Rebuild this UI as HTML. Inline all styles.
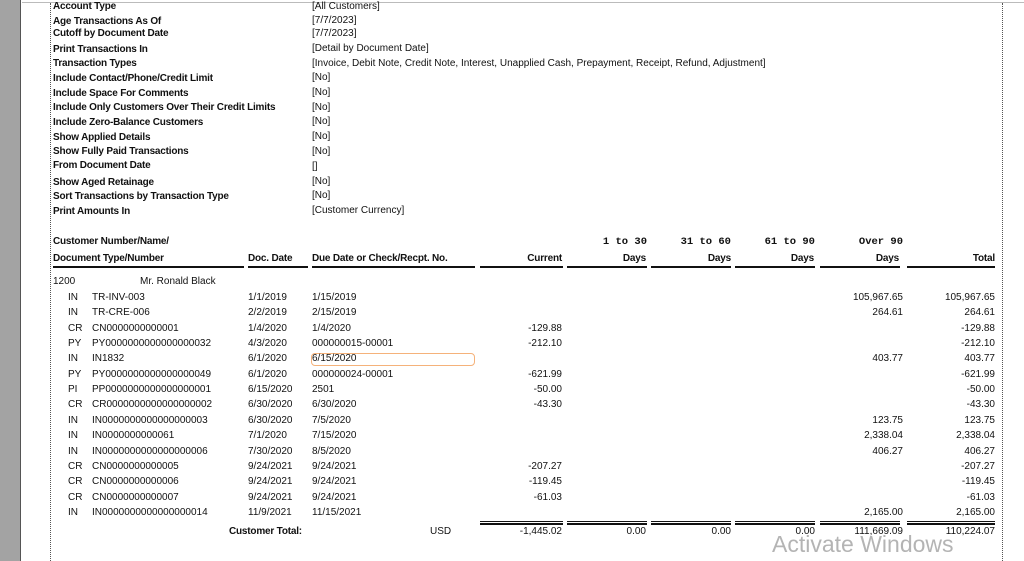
<!DOCTYPE html>
<html><head><meta charset="utf-8"><style>
*{margin:0;padding:0;box-sizing:border-box}
body{width:1024px;height:561px;overflow:hidden;background:#fff;font-family:"Liberation Sans",Arial,sans-serif;font-size:10px;color:#111;position:relative}
.gb{position:absolute;left:0;top:0;width:21px;height:561px;background:#a3a3a3;border-right:1px solid #555}
.top{position:absolute;left:22px;top:2px;right:0;height:1px;background:#bbb}
.vd{position:absolute;top:3px;height:558px;border-left:1px dotted #555}
.t{position:absolute;white-space:nowrap;line-height:12px}
.b{font-weight:bold;letter-spacing:-0.2px}
.r{text-align:right}
.m{font-family:"Liberation Mono",monospace;font-weight:bold;font-size:10.5px}
.ln{position:absolute;height:1.5px;background:#111}
</style></head><body>
<div class="gb"></div><div class="top"></div>
<div class="vd" style="left:50px"></div><div class="vd" style="left:1002px"></div>

<div class="t b" style="left:53px;top:1px">Account Type</div><div class="t" style="left:312px;top:1px">[All Customers]</div>
<div class="t b" style="left:53px;top:16px">Age Transactions As Of</div><div class="t" style="left:312px;top:15px">[7/7/2023]</div>
<div class="t b" style="left:53px;top:28px">Cutoff by Document Date</div><div class="t" style="left:312px;top:28px">[7/7/2023]</div>
<div class="t b" style="left:53px;top:44px">Print Transactions In</div><div class="t" style="left:312px;top:43px">[Detail by Document Date]</div>
<div class="t b" style="left:53px;top:58px">Transaction Types</div><div class="t" style="left:312px;top:58px">[Invoice, Debit Note, Credit Note, Interest, Unapplied Cash, Prepayment, Receipt, Refund, Adjustment]</div>
<div class="t b" style="left:53px;top:73px">Include Contact/Phone/Credit Limit</div><div class="t" style="left:312px;top:72px">[No]</div>
<div class="t b" style="left:53px;top:88px">Include Space For Comments</div><div class="t" style="left:312px;top:87px">[No]</div>
<div class="t b" style="left:53px;top:102px">Include Only Customers Over Their Credit Limits</div><div class="t" style="left:312px;top:102px">[No]</div>
<div class="t b" style="left:53px;top:117px">Include Zero-Balance Customers</div><div class="t" style="left:312px;top:116px">[No]</div>
<div class="t b" style="left:53px;top:132px">Show Applied Details</div><div class="t" style="left:312px;top:131px">[No]</div>
<div class="t b" style="left:53px;top:146px">Show Fully Paid Transactions</div><div class="t" style="left:312px;top:146px">[No]</div>
<div class="t b" style="left:53px;top:160px">From Document Date</div><div class="t" style="left:312px;top:161px">[]</div>
<div class="t b" style="left:53px;top:177px">Show Aged Retainage</div><div class="t" style="left:312px;top:176px">[No]</div>
<div class="t b" style="left:53px;top:191px">Sort Transactions by Transaction Type</div><div class="t" style="left:312px;top:190px">[No]</div>
<div class="t b" style="left:53px;top:206px">Print Amounts In</div><div class="t" style="left:312px;top:205px">[Customer Currency]</div>

<div class="t b" style="left:53px;top:236px">Customer Number/Name/</div>
<div class="t b" style="left:53px;top:253px">Document Type/Number</div>
<div class="t b" style="left:248px;top:253px">Doc. Date</div>
<div class="t b" style="left:312px;top:253px">Due Date or Check/Recpt. No.</div>
<div class="t b r" style="left:480px;width:82px;top:253px">Current</div>
<div class="t m r" style="left:567px;width:80px;top:236px">1 to 30</div>
<div class="t b r" style="left:567px;width:79px;top:253px">Days</div>
<div class="t m r" style="left:651px;width:80px;top:236px">31 to 60</div>
<div class="t b r" style="left:651px;width:80px;top:253px">Days</div>
<div class="t m r" style="left:735px;width:80px;top:236px">61 to 90</div>
<div class="t b r" style="left:735px;width:79px;top:253px">Days</div>
<div class="t m r" style="left:820px;width:83px;top:236px">Over 90</div>
<div class="t b r" style="left:820px;width:79px;top:253px">Days</div>
<div class="t b r" style="left:907px;width:88px;top:253px">Total</div>
<div class="ln" style="left:53px;width:191px;top:266px"></div>
<div class="ln" style="left:248px;width:60px;top:266px"></div>
<div class="ln" style="left:312px;width:163px;top:266px"></div>
<div class="ln" style="left:480px;width:83px;top:266px"></div>
<div class="ln" style="left:567px;width:80px;top:266px"></div>
<div class="ln" style="left:651px;width:80px;top:266px"></div>
<div class="ln" style="left:735px;width:80px;top:266px"></div>
<div class="ln" style="left:820px;width:80px;top:266px"></div>
<div class="ln" style="left:907px;width:88px;top:266px"></div>

<div class="t" style="left:53px;top:276px">1200</div><div class="t" style="left:140px;top:276px">Mr. Ronald Black</div>

<div style="position:absolute;left:311px;top:353px;width:164px;height:13px;border:1px solid #f5b27a;border-radius:4px"></div>

<div id="rows"></div>
<script>
var rows=[
["IN","TR-INV-003","1/1/2019","1/15/2019","","105,967.65","105,967.65"],
["IN","TR-CRE-006","2/2/2019","2/15/2019","","264.61","264.61"],
["CR","CN0000000000001","1/4/2020","1/4/2020","-129.88","","-129.88"],
["PY","PY0000000000000000032","4/3/2020","000000015-00001","-212.10","","-212.10"],
["IN","IN1832","6/1/2020","6/15/2020","","403.77","403.77"],
["PY","PY0000000000000000049","6/1/2020","000000024-00001","-621.99","","-621.99"],
["PI","PP0000000000000000001","6/15/2020","2501","-50.00","","-50.00"],
["CR","CR0000000000000000002","6/30/2020","6/30/2020","-43.30","","-43.30"],
["IN","IN0000000000000000003","6/30/2020","7/5/2020","","123.75","123.75"],
["IN","IN0000000000061","7/1/2020","7/15/2020","","2,338.04","2,338.04"],
["IN","IN0000000000000000006","7/30/2020","8/5/2020","","406.27","406.27"],
["CR","CN0000000000005","9/24/2021","9/24/2021","-207.27","","-207.27"],
["CR","CN0000000000006","9/24/2021","9/24/2021","-119.45","","-119.45"],
["CR","CN0000000000007","9/24/2021","9/24/2021","-61.03","","-61.03"],
["IN","IN0000000000000000014","11/9/2021","11/15/2021","","2,165.00","2,165.00"]];
var h="";
rows.forEach(function(r,i){var y=292+i*15.35;
h+='<div class="t" style="left:68px;top:'+y+'px">'+r[0]+'</div><div class="t" style="left:92px;top:'+y+'px">'+r[1]+'</div><div class="t" style="left:248px;top:'+y+'px">'+r[2]+'</div><div class="t" style="left:312px;top:'+y+'px">'+r[3]+'</div><div class="t r" style="left:480px;width:82px;top:'+y+'px">'+r[4]+'</div><div class="t r" style="left:800px;width:103px;top:'+y+'px">'+r[5]+'</div><div class="t r" style="left:895px;width:100px;top:'+y+'px">'+r[6]+'</div>';});
document.getElementById("rows").innerHTML=h;
</script>

<div class="ln" style="left:480px;width:83px;top:521px;height:1px"></div><div class="ln" style="left:480px;width:83px;top:523px"></div>
<div class="ln" style="left:567px;width:80px;top:521px;height:1px"></div><div class="ln" style="left:567px;width:80px;top:523px"></div>
<div class="ln" style="left:651px;width:80px;top:521px;height:1px"></div><div class="ln" style="left:651px;width:80px;top:523px"></div>
<div class="ln" style="left:735px;width:80px;top:521px;height:1px"></div><div class="ln" style="left:735px;width:80px;top:523px"></div>
<div class="ln" style="left:820px;width:80px;top:521px;height:1px"></div><div class="ln" style="left:820px;width:80px;top:523px"></div>
<div class="ln" style="left:907px;width:88px;top:521px;height:1px"></div><div class="ln" style="left:907px;width:88px;top:523px"></div>

<div class="t b" style="left:229px;top:526px">Customer Total:</div>
<div class="t" style="left:430px;top:526px">USD</div>
<div class="t r" style="left:480px;width:82px;top:526px">-1,445.02</div>
<div class="t r" style="left:567px;width:79px;top:526px">0.00</div>
<div class="t r" style="left:651px;width:80px;top:526px">0.00</div>
<div class="t r" style="left:735px;width:80px;top:526px">0.00</div>
<div class="t r" style="left:800px;width:103px;top:526px">111,669.09</div>
<div class="t r" style="left:895px;width:100px;top:526px">110,224.07</div>

<div class="t" style="left:772px;top:531px;font-size:23px;line-height:26px;color:#b4b4b4">Activate Windows</div>
</body></html>
